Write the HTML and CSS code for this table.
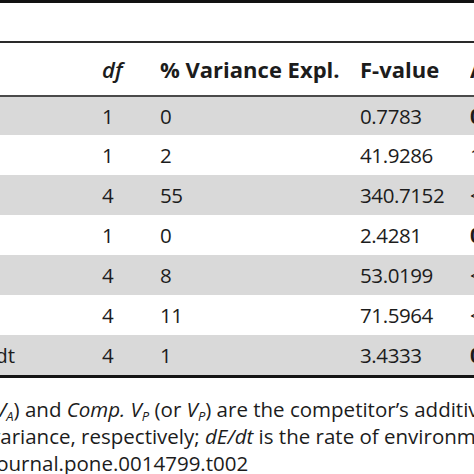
FILE: index.html
```html
<!DOCTYPE html>
<html>
<head>
<meta charset="utf-8">
<link rel="stylesheet" href="styles.css">
</head>
<body>
<div class="page">
  <div class="top-rule"></div>
  <div class="table">
    <div class="row head">
      <div class="c label"></div>
      <div class="c df"><i>df</i></div>
      <div class="c var">% Variance Expl.</div>
      <div class="c fv">F-value</div>
      <div class="c last">Adj.</div>
    </div>
    <div class="row shade first">
      <div class="c label"></div><div class="c df">1</div><div class="c var">0</div><div class="c fv">0.7783</div><div class="c last strong">0.3779</div>
    </div>
    <div class="row">
      <div class="c label"></div><div class="c df">1</div><div class="c var">2</div><div class="c fv">41.9286</div><div class="c last">1.1e-10</div>
    </div>
    <div class="row shade">
      <div class="c label"></div><div class="c df">4</div><div class="c var">55</div><div class="c fv">340.7152</div><div class="c last">&lt;0.0001</div>
    </div>
    <div class="row">
      <div class="c label"></div><div class="c df">1</div><div class="c var">0</div><div class="c fv">2.4281</div><div class="c last strong">0.1193</div>
    </div>
    <div class="row shade">
      <div class="c label"></div><div class="c df">4</div><div class="c var">8</div><div class="c fv">53.0199</div><div class="c last">&lt;0.0001</div>
    </div>
    <div class="row">
      <div class="c label"></div><div class="c df">4</div><div class="c var">11</div><div class="c fv">71.5964</div><div class="c last">&lt;0.0001</div>
    </div>
    <div class="row shade">
      <div class="c label">Comp. V × dE/dt</div><div class="c df">4</div><div class="c var">1</div><div class="c fv">3.4333</div><div class="c last strong">0.0081</div>
    </div>
  </div>
  <div class="caption">
    <div class="line l1"><i>V<sub>A</sub></i>) and <i>Comp. V<sub>P</sub></i> (or <i>V<sub>P</sub></i>) are the competitor’s additive genetic</div>
    <div class="line l2">variance, respectively; <i>dE/dt</i> is the rate of environmental change.</div>
    <div class="line l3">journal.pone.0014799.t002</div>
  </div>
</div>
</body>
</html>
```

FILE: styles.css
```css
html, body {
  margin: 0;
  padding: 0;
  background: #ffffff;
}

.page {
  width: 474px;
  height: 474px;
  overflow: hidden;
  font-family: "Open Sans", "Noto Sans", sans-serif;
  color: #1c1c1c;
  font-size: 20.5px;
}

.top-rule {
  height: 3px;
  background: #111111;
  margin-bottom: 38px;
}

.table {
  margin-left: -200px;
  width: 900px;
  border-top: 2px solid #2a2a2a;
  border-bottom: 3px solid #151515;
}

.row {
  display: grid;
  grid-template-columns: 302px 58px 200px 110px 230px;
  height: 40px;
  align-items: center;
  white-space: nowrap;
  letter-spacing: -0.4px;
}

.row.first {
  height: 38px;
}

.row.head {
  height: 52px;
  font-size: 22px;
  font-weight: 700;
  letter-spacing: 0;
  border-bottom: 2px solid #4a4a4a;
}

.row.head .df {
  font-weight: 600;
}

.row.shade {
  background: #d9d9d9;
}

.c {
  overflow: hidden;
}

.strong {
  font-weight: 700;
}

.label {
  text-align: right;
  padding-right: 87px;
  letter-spacing: 0;
}

.caption {
  margin-top: 18px;
  line-height: 27px;
  white-space: nowrap;
}

.line sub {
  font-size: 13px;
  vertical-align: -4px;
  line-height: 0;
}

.l1 {
  margin-left: -5px;
}

.l2 {
  margin-left: -10px;
}

.l3 {
  margin-left: -9px;
}
```
